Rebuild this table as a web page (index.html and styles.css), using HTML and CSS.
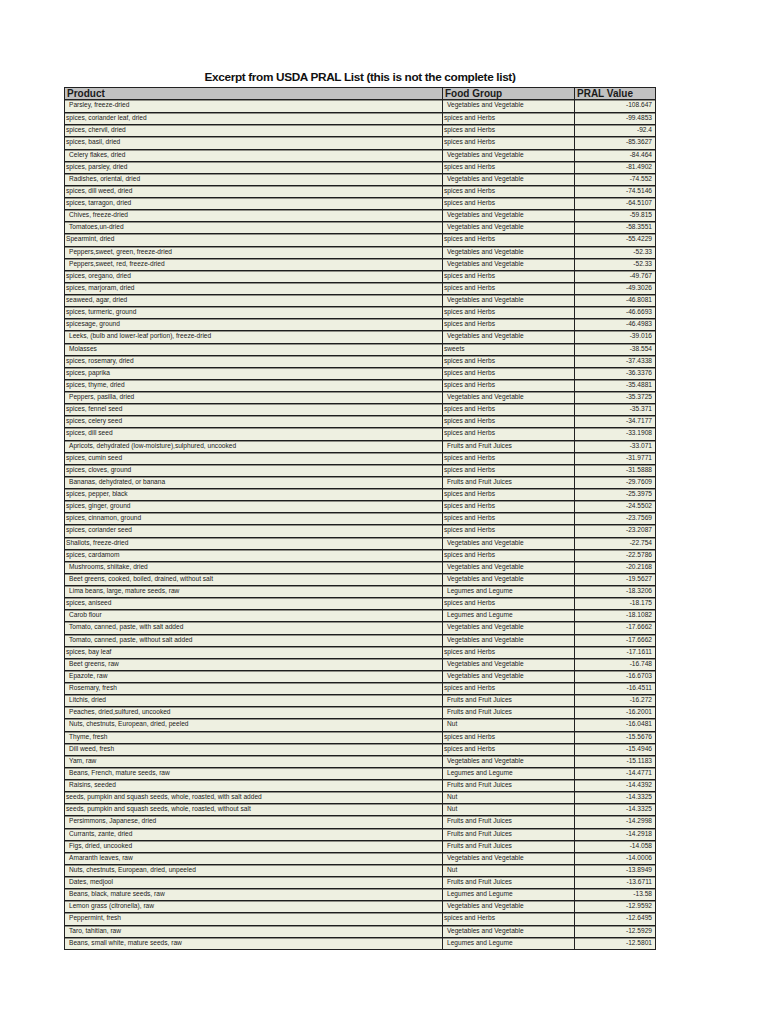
FILE: index.html
```html
<!DOCTYPE html>
<html>
<head>
<meta charset="utf-8">
<link rel="stylesheet" href="styles.css">
</head>
<body>
<div class="page">
  <h1 class="title">Excerpt from USDA PRAL List (this is not the complete list)</h1>
  <div class="table">
    <div class="row head"><div class="c p">Product</div><div class="c g">Food Group</div><div class="c hv">PRAL Value</div></div>
    <div class="row"><div class="c p i">Parsley, freeze-dried</div><div class="c g i">Vegetables and Vegetable</div><div class="c v">-108.647</div></div>
    <div class="row"><div class="c p">spices, coriander leaf, dried</div><div class="c g">spices and Herbs</div><div class="c v">-99.4853</div></div>
    <div class="row"><div class="c p">spices, chervil, dried</div><div class="c g">spices and Herbs</div><div class="c v">-92.4</div></div>
    <div class="row"><div class="c p">spices, basil, dried</div><div class="c g">spices and Herbs</div><div class="c v">-85.3627</div></div>
    <div class="row"><div class="c p i">Celery flakes, dried</div><div class="c g i">Vegetables and Vegetable</div><div class="c v">-84.464</div></div>
    <div class="row"><div class="c p">spices, parsley, dried</div><div class="c g">spices and Herbs</div><div class="c v">-81.4902</div></div>
    <div class="row"><div class="c p i">Radishes, oriental, dried</div><div class="c g i">Vegetables and Vegetable</div><div class="c v">-74.552</div></div>
    <div class="row"><div class="c p">spices, dill weed, dried</div><div class="c g">spices and Herbs</div><div class="c v">-74.5146</div></div>
    <div class="row"><div class="c p">spices, tarragon, dried</div><div class="c g">spices and Herbs</div><div class="c v">-64.5107</div></div>
    <div class="row"><div class="c p i">Chives, freeze-dried</div><div class="c g i">Vegetables and Vegetable</div><div class="c v">-59.815</div></div>
    <div class="row"><div class="c p i">Tomatoes,un-dried</div><div class="c g i">Vegetables and Vegetable</div><div class="c v">-58.3551</div></div>
    <div class="row"><div class="c p">Spearmint, dried</div><div class="c g">spices and Herbs</div><div class="c v">-55.4229</div></div>
    <div class="row"><div class="c p i">Peppers,sweet, green, freeze-dried</div><div class="c g i">Vegetables and Vegetable</div><div class="c v">-52.33</div></div>
    <div class="row"><div class="c p i">Peppers,sweet, red, freeze-dried</div><div class="c g i">Vegetables and Vegetable</div><div class="c v">-52.33</div></div>
    <div class="row"><div class="c p">spices, oregano, dried</div><div class="c g">spices and Herbs</div><div class="c v">-49.767</div></div>
    <div class="row"><div class="c p">spices, marjoram, dried</div><div class="c g">spices and Herbs</div><div class="c v">-49.3026</div></div>
    <div class="row"><div class="c p">seaweed, agar, dried</div><div class="c g i">Vegetables and Vegetable</div><div class="c v">-46.8081</div></div>
    <div class="row"><div class="c p">spices, turmeric, ground</div><div class="c g">spices and Herbs</div><div class="c v">-46.6693</div></div>
    <div class="row"><div class="c p">spicesage, ground</div><div class="c g">spices and Herbs</div><div class="c v">-46.4983</div></div>
    <div class="row"><div class="c p i">Leeks, (bulb and lower-leaf portion), freeze-dried</div><div class="c g i">Vegetables and Vegetable</div><div class="c v">-39.016</div></div>
    <div class="row"><div class="c p i">Molasses</div><div class="c g">sweets</div><div class="c v">-38.554</div></div>
    <div class="row"><div class="c p">spices, rosemary, dried</div><div class="c g">spices and Herbs</div><div class="c v">-37.4338</div></div>
    <div class="row"><div class="c p">spices, paprika</div><div class="c g">spices and Herbs</div><div class="c v">-36.3376</div></div>
    <div class="row"><div class="c p">spices, thyme, dried</div><div class="c g">spices and Herbs</div><div class="c v">-35.4881</div></div>
    <div class="row"><div class="c p i">Peppers, pasilla, dried</div><div class="c g i">Vegetables and Vegetable</div><div class="c v">-35.3725</div></div>
    <div class="row"><div class="c p">spices, fennel seed</div><div class="c g">spices and Herbs</div><div class="c v">-35.371</div></div>
    <div class="row"><div class="c p">spices, celery seed</div><div class="c g">spices and Herbs</div><div class="c v">-34.7177</div></div>
    <div class="row"><div class="c p">spices, dill seed</div><div class="c g">spices and Herbs</div><div class="c v">-33.1908</div></div>
    <div class="row"><div class="c p i">Apricots, dehydrated (low-moisture),sulphured, uncooked</div><div class="c g i">Fruits and Fruit Juices</div><div class="c v">-33.071</div></div>
    <div class="row"><div class="c p">spices, cumin seed</div><div class="c g">spices and Herbs</div><div class="c v">-31.9771</div></div>
    <div class="row"><div class="c p">spices, cloves, ground</div><div class="c g">spices and Herbs</div><div class="c v">-31.5888</div></div>
    <div class="row"><div class="c p i">Bananas, dehydrated, or banana</div><div class="c g i">Fruits and Fruit Juices</div><div class="c v">-29.7609</div></div>
    <div class="row"><div class="c p">spices, pepper, black</div><div class="c g">spices and Herbs</div><div class="c v">-25.3975</div></div>
    <div class="row"><div class="c p">spices, ginger, ground</div><div class="c g">spices and Herbs</div><div class="c v">-24.5502</div></div>
    <div class="row"><div class="c p">spices, cinnamon, ground</div><div class="c g">spices and Herbs</div><div class="c v">-23.7569</div></div>
    <div class="row"><div class="c p">spices, coriander seed</div><div class="c g">spices and Herbs</div><div class="c v">-23.2087</div></div>
    <div class="row"><div class="c p">Shallots, freeze-dried</div><div class="c g i">Vegetables and Vegetable</div><div class="c v">-22.754</div></div>
    <div class="row"><div class="c p">spices, cardamom</div><div class="c g">spices and Herbs</div><div class="c v">-22.5786</div></div>
    <div class="row"><div class="c p i">Mushrooms, shiitake, dried</div><div class="c g i">Vegetables and Vegetable</div><div class="c v">-20.2168</div></div>
    <div class="row"><div class="c p i">Beet greens, cooked, boiled, drained, without salt</div><div class="c g i">Vegetables and Vegetable</div><div class="c v">-19.5627</div></div>
    <div class="row"><div class="c p i">Lima beans, large, mature seeds, raw</div><div class="c g i">Legumes and Legume</div><div class="c v">-18.3206</div></div>
    <div class="row"><div class="c p">spices, aniseed</div><div class="c g">spices and Herbs</div><div class="c v">-18.175</div></div>
    <div class="row"><div class="c p i">Carob flour</div><div class="c g i">Legumes and Legume</div><div class="c v">-18.1082</div></div>
    <div class="row"><div class="c p i">Tomato, canned, paste, with salt added</div><div class="c g i">Vegetables and Vegetable</div><div class="c v">-17.6662</div></div>
    <div class="row"><div class="c p i">Tomato, canned, paste, without salt added</div><div class="c g i">Vegetables and Vegetable</div><div class="c v">-17.6662</div></div>
    <div class="row"><div class="c p">spices, bay leaf</div><div class="c g">spices and Herbs</div><div class="c v">-17.1611</div></div>
    <div class="row"><div class="c p i">Beet greens, raw</div><div class="c g i">Vegetables and Vegetable</div><div class="c v">-16.748</div></div>
    <div class="row"><div class="c p i">Epazote, raw</div><div class="c g i">Vegetables and Vegetable</div><div class="c v">-16.6703</div></div>
    <div class="row"><div class="c p i">Rosemary, fresh</div><div class="c g">spices and Herbs</div><div class="c v">-16.4511</div></div>
    <div class="row"><div class="c p i">Litchis, dried</div><div class="c g i">Fruits and Fruit Juices</div><div class="c v">-16.272</div></div>
    <div class="row"><div class="c p i">Peaches, dried,sulfured, uncooked</div><div class="c g i">Fruits and Fruit Juices</div><div class="c v">-16.2001</div></div>
    <div class="row"><div class="c p i">Nuts, chestnuts, European, dried, peeled</div><div class="c g i">Nut</div><div class="c v">-16.0481</div></div>
    <div class="row"><div class="c p i">Thyme, fresh</div><div class="c g">spices and Herbs</div><div class="c v">-15.5676</div></div>
    <div class="row"><div class="c p i">Dill weed, fresh</div><div class="c g">spices and Herbs</div><div class="c v">-15.4946</div></div>
    <div class="row"><div class="c p i">Yam, raw</div><div class="c g i">Vegetables and Vegetable</div><div class="c v">-15.1183</div></div>
    <div class="row"><div class="c p i">Beans, French, mature seeds, raw</div><div class="c g i">Legumes and Legume</div><div class="c v">-14.4771</div></div>
    <div class="row"><div class="c p i">Raisins, seeded</div><div class="c g i">Fruits and Fruit Juices</div><div class="c v">-14.4392</div></div>
    <div class="row"><div class="c p">seeds, pumpkin and squash seeds, whole, roasted, with salt added</div><div class="c g i">Nut</div><div class="c v">-14.3325</div></div>
    <div class="row"><div class="c p">seeds, pumpkin and squash seeds, whole, roasted, without salt</div><div class="c g i">Nut</div><div class="c v">-14.3325</div></div>
    <div class="row"><div class="c p i">Persimmons, Japanese, dried</div><div class="c g i">Fruits and Fruit Juices</div><div class="c v">-14.2998</div></div>
    <div class="row"><div class="c p i">Currants, zante, dried</div><div class="c g i">Fruits and Fruit Juices</div><div class="c v">-14.2918</div></div>
    <div class="row"><div class="c p i">Figs, dried, uncooked</div><div class="c g i">Fruits and Fruit Juices</div><div class="c v">-14.058</div></div>
    <div class="row"><div class="c p i">Amaranth leaves, raw</div><div class="c g i">Vegetables and Vegetable</div><div class="c v">-14.0006</div></div>
    <div class="row"><div class="c p i">Nuts, chestnuts, European, dried, unpeeled</div><div class="c g i">Nut</div><div class="c v">-13.8949</div></div>
    <div class="row"><div class="c p i">Dates, medjool</div><div class="c g i">Fruits and Fruit Juices</div><div class="c v">-13.6711</div></div>
    <div class="row"><div class="c p i">Beans, black, mature seeds, raw</div><div class="c g i">Legumes and Legume</div><div class="c v">-13.58</div></div>
    <div class="row"><div class="c p i">Lemon grass (citronella), raw</div><div class="c g i">Vegetables and Vegetable</div><div class="c v">-12.9592</div></div>
    <div class="row"><div class="c p i">Peppermint, fresh</div><div class="c g">spices and Herbs</div><div class="c v">-12.6495</div></div>
    <div class="row"><div class="c p i">Taro, tahitian, raw</div><div class="c g i">Vegetables and Vegetable</div><div class="c v">-12.5929</div></div>
    <div class="row"><div class="c p i">Beans, small white, mature seeds, raw</div><div class="c g i">Legumes and Legume</div><div class="c v">-12.5801</div></div>
  </div>
</div>
</body>
</html>
```

FILE: styles.css
```css
html, body {
  margin: 0;
  padding: 0;
  background: #ffffff;
}

.page {
  width: 592px;
  margin-left: 64px;
  padding-top: 69px;
  display: flex;
  flex-direction: column;
}

.title {
  margin: 0 0 2px 0;
  height: 16px;
  text-align: center;
  font-family: "Liberation Sans", Arial, sans-serif;
  font-weight: bold;
  font-size: 11.8px;
  line-height: 16px;
  letter-spacing: -0.35px;
  color: #111;
}

.table {
  width: 590px;
  border: 1px solid #222;
  display: flex;
  flex-direction: column;
  font-family: "Liberation Sans", Arial, sans-serif;
  color: #222;
}

.row {
  display: grid;
  grid-template-columns: 377px 132px 1fr;
  height: 12.13px;
  box-sizing: border-box;
  border-top: 1px solid #1f1f1f;
  box-shadow: inset 0 1px 0 #8f8f86;
  background: #eef0e1;
  font-size: 6.6px;
  line-height: 10.5px;
}

.row.head {
  border-top: none;
  box-shadow: none;
  height: 12px;
  background: #c2c2c2;
  font-size: 10px;
  font-weight: bold;
  line-height: 12px;
  color: #1a1a1a;
  border-bottom: 1px solid #222;
}

.row.head + .row {
  border-top: none;
}

.c {
  white-space: nowrap;
  overflow: hidden;
  padding-left: 1px;
}

.c + .c {
  border-left: 1px solid #222;
}

.head .c {
  padding-left: 2px;
}

.c.i {
  padding-left: 4px;
}

.c.v {
  text-align: right;
  padding-right: 3px;
}
```
